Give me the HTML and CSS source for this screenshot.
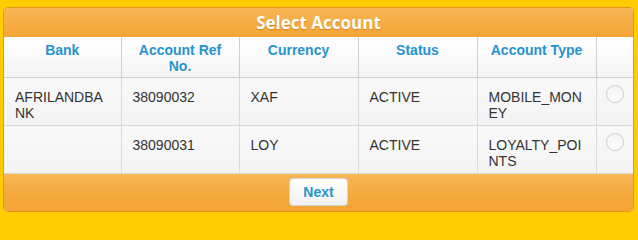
FILE: index.html
```html
<!DOCTYPE html>
<html>
<head>
<meta charset="utf-8">
<link rel="stylesheet" href="styles.css">
</head>
<body>
<div class="panel">
  <div class="title">Select Account</div>
  <table class="accounts">
    <colgroup>
      <col class="c1"><col class="c2"><col class="c3"><col class="c4"><col class="c5"><col class="c6">
    </colgroup>
    <thead>
      <tr>
        <th>Bank</th>
        <th>Account Ref No.</th>
        <th>Currency</th>
        <th>Status</th>
        <th>Account Type</th>
        <th></th>
      </tr>
    </thead>
    <tbody>
      <tr>
        <td>AFRILANDBANK</td>
        <td>38090032</td>
        <td>XAF</td>
        <td>ACTIVE</td>
        <td>MOBILE_MONEY</td>
        <td class="sel"><span class="radio"></span></td>
      </tr>
      <tr>
        <td></td>
        <td>38090031</td>
        <td>LOY</td>
        <td>ACTIVE</td>
        <td>LOYALTY_POINTS</td>
        <td class="sel"><span class="radio"></span></td>
      </tr>
    </tbody>
  </table>
  <div class="footer">
    <button class="btn">Next</button>
  </div>
</div>
</body>
</html>
```

FILE: styles.css
```css
html, body {
  margin: 0;
  padding: 0;
}
body {
  background: #ffcc00;
  padding: 7px 4px 0 3px;
  font-family: "Liberation Sans", Arial, sans-serif;
}
.panel {
  border: 1px solid #e8961f;
  border-radius: 5px;
  overflow: hidden;
  background: #f6f6f6;
}
.title {
  height: 29px;
  line-height: 29px;
  text-align: center;
  color: #fff;
  font-family: "Open Sans", sans-serif;
  font-weight: 700;
  font-size: 17px;
  background: linear-gradient(#f8b555, #f4a535);
  text-shadow: 0 1px 1px rgba(180, 100, 0, 0.5);
}
.accounts {
  width: 100%;
  border-collapse: collapse;
  table-layout: fixed;
}
.c1 { width: 117px; }
.c2 { width: 118px; }
.c3 { width: 119px; }
.c4 { width: 119px; }
.c5 { width: 119px; }
.accounts th {
  font-weight: 700;
  font-size: 14px;
  line-height: 16px;
  color: #2693cc;
  text-align: center;
  vertical-align: top;
  padding: 5px 11px 3px;
  height: 32px;
  background: linear-gradient(#ffffff, #f4f4f4);
  border-left: 1px solid #cfcfcf;
  border-bottom: 1px solid #cfcfcf;
  text-shadow: 0 1px 0 #fff;
}
.accounts th:first-child,
.accounts td:first-child {
  border-left: none;
}
.accounts td {
  font-size: 14px;
  line-height: 16px;
  color: #333;
  vertical-align: top;
  padding: 11px 11px 4px;
  height: 32px;
  word-break: break-all;
  background: linear-gradient(#f9f9f9, #f3f3f3);
  border-left: 1px solid #dadada;
  border-bottom: 1px solid #dadada;
}
.accounts td.sel {
  padding: 7px 0 0;
  text-align: center;
}
.radio {
  display: inline-block;
  width: 16px;
  height: 16px;
  border: 1px solid #cfcfcf;
  border-radius: 50%;
  background: linear-gradient(#f4f4f4, #fcfcfc);
}
.footer {
  height: 37px;
  display: flex;
  justify-content: center;
  align-items: flex-start;
  background: linear-gradient(#f7b655, #f4a83a 60%, #f3a534);
}
.btn {
  margin-top: 4px;
  width: 59px;
  height: 28px;
  border: 1px solid #d6d6d6;
  border-radius: 4px;
  background: linear-gradient(#ffffff, #f1f1f1);
  color: #2693cc;
  font-family: "Liberation Sans", Arial, sans-serif;
  font-weight: 700;
  font-size: 14px;
  padding: 0;
  text-shadow: 0 1px 0 #fff;
}
```
